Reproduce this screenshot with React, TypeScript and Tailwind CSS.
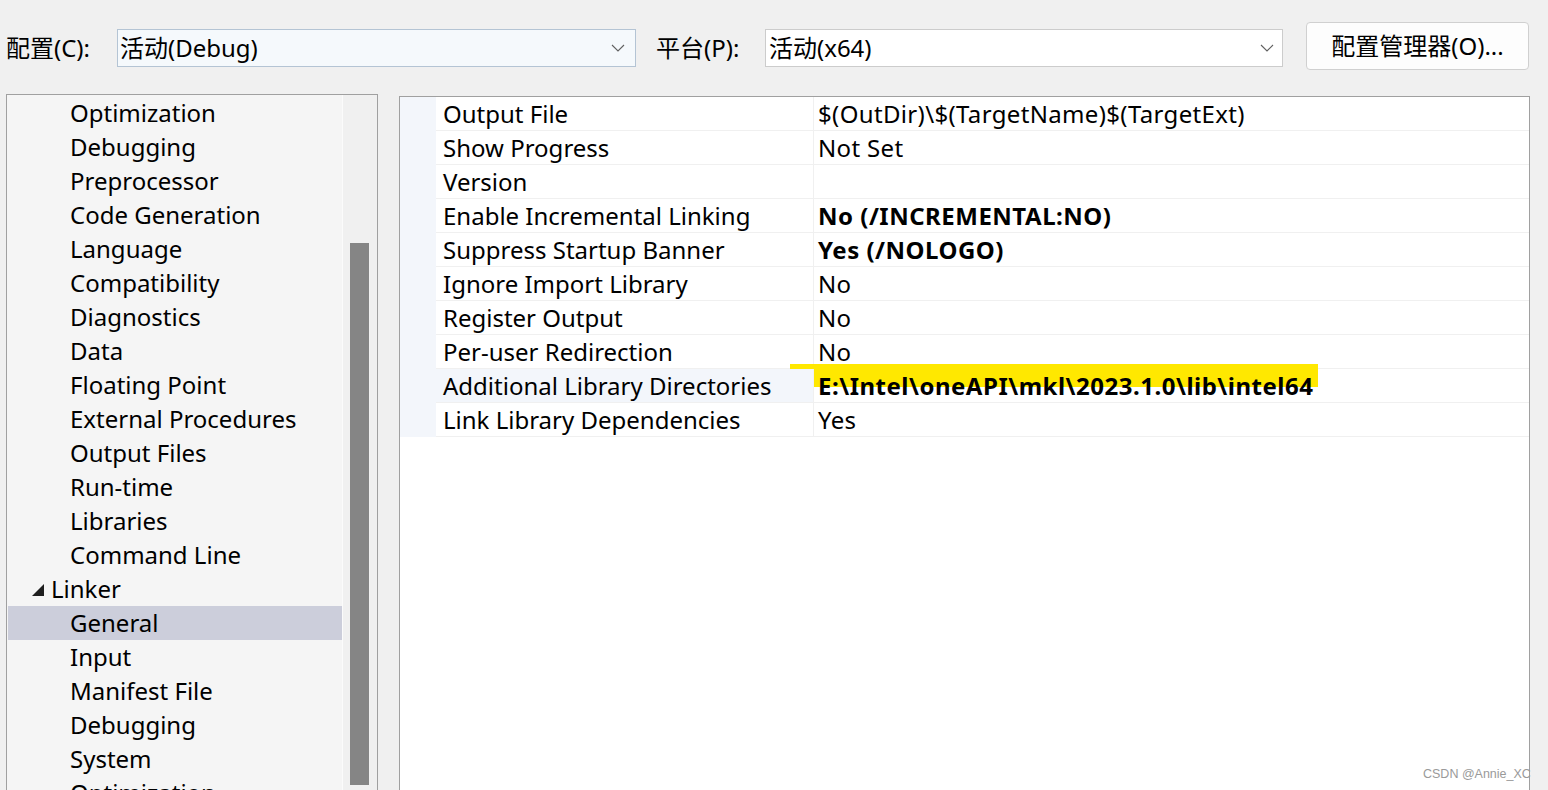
import React from "react";

const treeItems: { label: string; kind?: "linker" | "selected" }[] = [
  { label: "Optimization" },
  { label: "Debugging" },
  { label: "Preprocessor" },
  { label: "Code Generation" },
  { label: "Language" },
  { label: "Compatibility" },
  { label: "Diagnostics" },
  { label: "Data" },
  { label: "Floating Point" },
  { label: "External Procedures" },
  { label: "Output Files" },
  { label: "Run-time" },
  { label: "Libraries" },
  { label: "Command Line" },
  { label: "Linker", kind: "linker" },
  { label: "General", kind: "selected" },
  { label: "Input" },
  { label: "Manifest File" },
  { label: "Debugging" },
  { label: "System" },
  { label: "Optimization" },
];

const props: { name: string; value: string; bold?: boolean; sel?: boolean; mark?: boolean }[] = [
  { name: "Output File", value: "$(OutDir)\\$(TargetName)$(TargetExt)" },
  { name: "Show Progress", value: "Not Set" },
  { name: "Version", value: "" },
  { name: "Enable Incremental Linking", value: "No (/INCREMENTAL:NO)", bold: true },
  { name: "Suppress Startup Banner", value: "Yes (/NOLOGO)", bold: true },
  { name: "Ignore Import Library", value: "No" },
  { name: "Register Output", value: "No" },
  { name: "Per-user Redirection", value: "No" },
  { name: "Additional Library Directories", value: "E:\\Intel\\oneAPI\\mkl\\2023.1.0\\lib\\intel64", bold: true, sel: true, mark: true },
  { name: "Link Library Dependencies", value: "Yes" },
];

function Chevron() {
  return (
    <svg width="14" height="8" viewBox="0 0 14 8" className="shrink-0">
      <path d="M1 1 L7 7 L13 1" fill="none" stroke="#606060" strokeWidth="1.1" />
    </svg>
  );
}

export default function App() {
  return (
    <div
      className="relative w-[1548px] h-[790px] overflow-hidden bg-[#f0f0f0] text-black"
      style={{ fontFamily: '"Noto Sans", "Noto Sans CJK SC", sans-serif' }}
    >
      {/* top bar */}
      <div className="flex items-center pt-[22px] h-[70px] text-[24px] leading-none">
        <div className="w-[117px] pl-[6px] mt-[4px] pb-[1px]">配置(C):</div>
        <div className="flex items-center justify-between w-[519px] h-[38px] mt-[4px] bg-[#f5f9fc] border border-[#b4c4d4] pl-[2px] pr-[10px]">
          <span>活动(Debug)</span>
          <Chevron />
        </div>
        <div className="w-[129px] pl-[20px] mt-[4px] pb-[1px]">平台(P):</div>
        <div className="flex items-center justify-between w-[518px] h-[38px] mt-[4px] bg-white border border-[#cccccc] pl-[3px] pr-[8px]">
          <span>活动(x64)</span>
          <Chevron />
        </div>
        <div className="ml-[23px] flex items-center justify-center w-[223px] h-[48px] bg-[#fdfdfd] border border-[#d0d0d0] rounded-[4px]">
          配置管理器(O)...
        </div>
      </div>

      {/* panels */}
      <div className="flex items-start mt-[24px] text-[24px] leading-none">
        {/* tree */}
        <div className="ml-[6px] w-[372px] h-[760px] border border-[#a0a0a0] flex">
          <div className="flex-1 bg-[#f5f5f5] pt-[1px]">
            {treeItems.map((it, i) => (
              <div
                key={i}
                className={
                  it.kind === "selected"
                    ? "h-[34px] flex items-center pl-[62px] ml-[1px] bg-[#cccedb]"
                    : it.kind === "linker"
                    ? "h-[34px] flex items-center pl-[25px]"
                    : "h-[34px] flex items-center pl-[63px]"
                }
              >
                {it.kind === "linker" && (
                  <svg width="12" height="12" viewBox="0 0 12 12" className="mr-[7px] mt-[1px]">
                    <polygon points="12,0 12,12 0,12" fill="#1e1e1e" />
                  </svg>
                )}
                <span>{it.label}</span>
              </div>
            ))}
          </div>
          <div className="w-[35px] h-full bg-[#f0f0f0] border-l border-[#fbfbfb] pl-[7px] pt-[148px]">
            <div className="w-[19px] h-[542px] bg-[#858585]" />
          </div>
        </div>

        {/* property grid */}
        <div className="ml-[21px] mt-[2px] w-[1131px] h-[760px] border border-[#a0a0a0] bg-white">
          {props.map((p, i) => (
            <div key={i} className="relative flex h-[34px]">
              {p.mark && (
                <div className="absolute left-[390px] top-[-5px] w-[528px] h-[23px] bg-[#ffe800]" />
              )}
              <div className="w-[36px] bg-[#f3f6fb]" />
              <div
                className={
                  "relative w-[378px] flex items-center pl-[7px] border-b border-r border-[#f0f0f0] " +
                  (p.sel ? "bg-[#f3f6fb]" : "")
                }
              >
                <span>{p.name}</span>
              </div>
              <div className="relative flex-1 flex items-center pl-[4px] border-b border-[#f0f0f0]">
                <span className={p.bold ? "font-bold tracking-[0.5px]" : "tracking-[0.35px]"}>{p.value}</span>
              </div>
            </div>
          ))}
        </div>
      </div>

      <div
        className="absolute left-[1423px] top-[768px] text-[12.5px] text-[#9a9a9a] leading-none"
        style={{ fontFamily: '"Liberation Sans", Arial, sans-serif' }}
      >
        CSDN @Annie_XC
      </div>
    </div>
  );
}
